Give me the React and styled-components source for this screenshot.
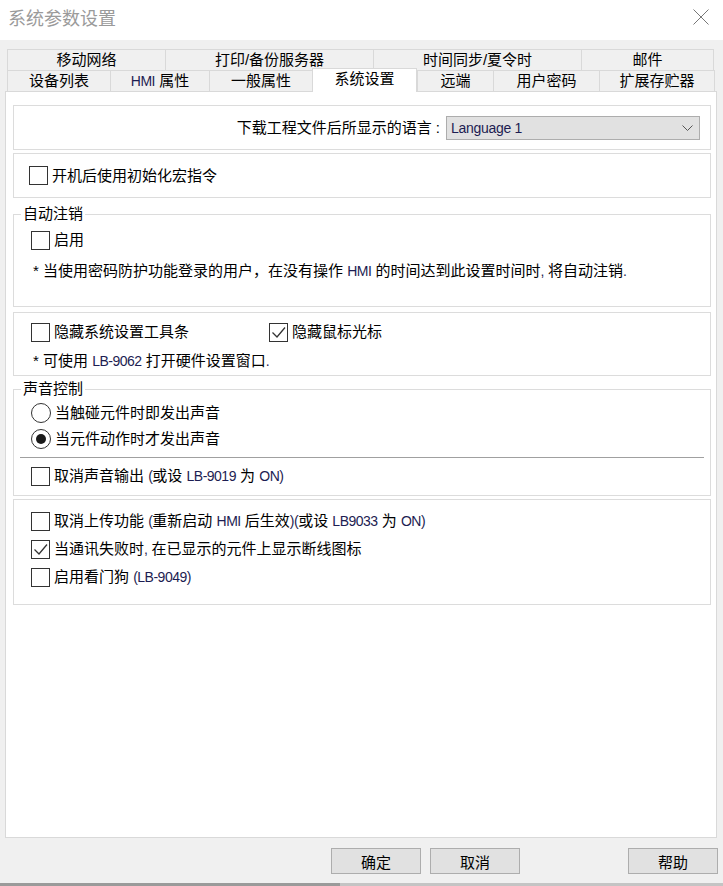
import React from 'react'
import styled, { createGlobalStyle } from 'styled-components'

const GlobalStyle = createGlobalStyle`
    html, body {
        margin: 0;
        padding: 0;
        background: #f0f0f0;
    }
    body {
        font-family: "Liberation Sans", "Noto Sans CJK SC", sans-serif;
        font-size: 15px;
        color: #000;
    }
`;

const Window = styled.div`
    width: 723px;
    height: 886px;
    display: flex;
    flex-direction: column;
    background: #f0f0f0;
    overflow: hidden;
`;

const TitleBar = styled.div`
    flex: none;
    height: 40px;
    background: #fff;
    display: flex;
    align-items: center;
    justify-content: space-between;
    padding: 0 14px 0 8px;
    box-sizing: border-box;
`;

const Title = styled.div`
    font-family: "Noto Sans CJK SC", sans-serif;
    font-size: 18px;
    color: #9a9a9a;
    margin-top: -7px;
`;

const CloseButton = styled.button`
    border: none;
    background: none;
    padding: 0;
    width: 16px;
    height: 16px;
    display: flex;
    margin-top: -7px;
`;

const Body = styled.div`
    flex: 1;
    display: flex;
    flex-direction: column;
    padding: 9px 6px 0 5px;
`;

const TabRow = styled.div`
    display: flex;
    align-items: flex-start;
    margin-left: 2px;
    height: 21px;
`;

const Tab = styled.div`
    width: ${p => p.$w}px;
    height: ${p => (p.$active ? 24 : 21)}px;
    margin-top: ${p => (p.$active ? -2 : 0)}px;
    box-sizing: border-box;
    border: 1px solid #d9d9d9;
    border-bottom: none;
    border-right: ${p => (p.$last || p.$active ? '1px solid #d9d9d9' : 'none')};
    background: ${p => (p.$active ? '#fff' : '#f0f0f0')};
    position: ${p => (p.$active ? 'relative' : 'static')};
    z-index: ${p => (p.$active ? 1 : 'auto')};
    display: flex;
    justify-content: center;
    align-items: flex-start;
    line-height: 19px;
    white-space: nowrap;
`;

const Panel = styled.div`
    height: 747px;
    box-sizing: border-box;
    border: 1px solid #d9d9d9;
    background: #fff;
    padding: 13px 5px 0 7px;
`;

const Group = styled.div`
    border: 1px solid #dcdcdc;
    margin-top: ${p => p.$mt || 0}px;
    padding: ${p => p.$pad || '0'};
`;

const LanguageGroup = styled(Group)`
    height: 45px;
    box-sizing: border-box;
    display: flex;
    align-items: center;
    justify-content: flex-end;
    padding-right: 10px;
`;

const SingleGroup = styled(Group)`
    height: 45px;
    box-sizing: border-box;
    display: flex;
    align-items: center;
    padding-left: 15px;
`;

const Section = styled.fieldset`
    margin: ${p => p.$mt || 0}px 0 0 0;
    padding: 0;
    border: 1px solid #dcdcdc;
    min-inline-size: 0;
`;

const Legend = styled.legend`
    margin-left: 7px;
    padding: 0 2px;
    line-height: 18px;
`;

const SectionBody = styled.div`
    padding: ${p => p.$pad};
`;

const FieldLabel = styled.span`
    margin-right: 6px;
    line-height: 20px;
`;

const Select = styled.div`
    width: 254px;
    height: 24px;
    box-sizing: border-box;
    border: 1px solid #adadad;
    background: #e1e1e1;
    display: flex;
    align-items: center;
    justify-content: space-between;
    padding: 0 6px 0 4px;
    font-size: 14px;
    letter-spacing: -0.3px;
    color: #1d1d52;
`;

const Row = styled.div`
    display: flex;
    align-items: center;
    height: 26px;
    margin-top: ${p => p.$mt || 0}px;
`;

const Item = styled.label`
    display: flex;
    align-items: center;
    gap: 4px;
    width: ${p => (p.$w ? `${p.$w}px` : 'auto')};
    line-height: 20px;
    white-space: nowrap;
`;

const Box = styled.span`
    width: 19px;
    height: 19px;
    box-sizing: border-box;
    border: 1px solid #333;
    background: #fff;
    display: flex;
    align-items: center;
    justify-content: center;
    flex: none;
`;

const Radio = styled(Box)`
    width: 20px;
    height: 20px;
    border-radius: 50%;

    &::after {
        content: '';
        width: 10px;
        height: 10px;
        border-radius: 50%;
        background: ${p => (p.$on ? '#1a1a1a' : 'transparent')};
    }
`;

const Note = styled.div`
    line-height: 20px;
    margin: ${p => p.$mt || 0}px 0 0 2px;
    white-space: nowrap;
`;

/* latin runs are a little condensed and navy next to the CJK text */
const En = styled.span`
    color: #1d1d52;
    font-size: 14px;
    letter-spacing: -0.5px;
`;

const Separator = styled.div`
    height: 1px;
    background: #a0a0a0;
    margin: 5px 6px 0 -11px;
`;

const ButtonBar = styled.div`
    display: flex;
    justify-content: flex-end;
    margin: 10px -1px 0 0;
    gap: 9px;
`;

const Button = styled.button`
    width: 90px;
    height: 26px;
    box-sizing: border-box;
    border: 1px solid #adadad;
    background: #e1e1e1;
    font-family: "Liberation Sans", "Noto Sans CJK SC", sans-serif;
    font-size: 15px;
    color: #000;
    padding: 0;
    margin-left: ${p => p.$ml || 0}px;
`;

const BottomEdge = styled.div`
    flex: none;
    height: 3px;
    background: linear-gradient(to right, #9a9a9a 0, #9a9a9a 340px, #c4c4c4 340px);
`;

const CloseIcon = () => (
    <svg width="16" height="16" viewBox="0 0 16 16">
        <path d="M0.5 0.5 L15.5 15.5 M15.5 0.5 L0.5 15.5" stroke="#777" strokeWidth="1" fill="none" />
    </svg>
);

const Chevron = () => (
    <svg width="11" height="6" viewBox="0 0 11 6">
        <path d="M0.5 0.5 L5.5 5.5 L10.5 0.5" stroke="#555" strokeWidth="1" fill="none" />
    </svg>
);

const Check = ({ on }) => (
    <Box>
        {on && (
            <svg width="17" height="17" viewBox="0 0 17 17">
                <path d="M2.5 8.5 L7 13 L15 3.5" stroke="#333" strokeWidth="1.3" fill="none" />
            </svg>
        )}
    </Box>
);

const CheckItem = ({ on, w, children }) => (
    <Item $w={w}>
        <Check on={on} />
        <span>{children}</span>
    </Item>
);

const RadioItem = ({ on, children }) => (
    <Item>
        <Radio $on={on} />
        <span>{children}</span>
    </Item>
);

const topTabs = [
    { label: '移动网络', w: 158 },
    { label: '打印/备份服务器', w: 208 },
    { label: '时间同步/夏令时', w: 208 },
    { label: '邮件', w: 133 },
];

const bottomTabs = [
    { label: '设备列表', w: 103 },
    { label: <><En>HMI</En> 属性</>, w: 99 },
    { label: '一般属性', w: 103 },
    { label: '系统设置', w: 105, active: true },
    { label: '远端', w: 76 },
    { label: '用户密码', w: 106 },
    { label: '扩展存贮器', w: 116 },
];

const App = () => {
    return (
        <Window>
            <GlobalStyle />
            <TitleBar>
                <Title>系统参数设置</Title>
                <CloseButton><CloseIcon /></CloseButton>
            </TitleBar>
            <Body>
                <TabRow>
                    {topTabs.map((t, i) => (
                        <Tab key={i} $w={t.w} $last={i === topTabs.length - 1}>
                            <span>{t.label}</span>
                        </Tab>
                    ))}
                </TabRow>
                <TabRow>
                    {bottomTabs.map((t, i) => (
                        <Tab key={i} $w={t.w} $active={t.active} $last={i === bottomTabs.length - 1}>
                            <span>{t.label}</span>
                        </Tab>
                    ))}
                </TabRow>
                <Panel>
                    <LanguageGroup>
                        <FieldLabel>下载工程文件后所显示的语言 :</FieldLabel>
                        <Select>
                            <span>Language 1</span>
                            <Chevron />
                        </Select>
                    </LanguageGroup>

                    <SingleGroup $mt={3}>
                        <CheckItem>开机后使用初始化宏指令</CheckItem>
                    </SingleGroup>

                    <Section $mt={7}>
                        <Legend>自动注销</Legend>
                        <SectionBody $pad="4px 0 25px 17px">
                            <Row>
                                <CheckItem>启用</CheckItem>
                            </Row>
                            <Note $mt={8}>
                                * 当使用密码防护功能登录的用户，在没有操作 <En>HMI</En> 的时间达到此设置时间时<En>,</En> 将自动注销<En>.</En>
                            </Note>
                        </SectionBody>
                    </Section>

                    <Group $mt={5} $pad="6px 0 4px 17px">
                        <Row>
                            <CheckItem w={238}>隐藏系统设置工具条</CheckItem>
                            <CheckItem on>隐藏鼠标光标</CheckItem>
                        </Row>
                        <Note $mt={6}>
                            * 可使用 <En>LB-9062</En> 打开硬件设置窗口<En>.</En>
                        </Note>
                    </Group>

                    <Section $mt={4}>
                        <Legend>声音控制</Legend>
                        <SectionBody $pad="2px 0 6px 17px">
                            <Row>
                                <RadioItem>当触碰元件时即发出声音</RadioItem>
                            </Row>
                            <Row>
                                <RadioItem on>当元件动作时才发出声音</RadioItem>
                            </Row>
                            <Separator />
                            <Row $mt={5}>
                                <CheckItem>取消声音输出 <En>(</En>或设 <En>LB-9019</En> 为 <En>ON)</En></CheckItem>
                            </Row>
                        </SectionBody>
                    </Section>

                    <Group $mt={3} $pad="8px 0 14px 17px">
                        <Row>
                            <CheckItem>取消上传功能 <En>(</En>重新启动 <En>HMI</En> 后生效<En>)(</En>或设 <En>LB9033</En> 为 <En>ON)</En></CheckItem>
                        </Row>
                        <Row $mt={2}>
                            <CheckItem on>当通讯失败时<En>,</En> 在已显示的元件上显示断线图标</CheckItem>
                        </Row>
                        <Row $mt={2}>
                            <CheckItem>启用看门狗 <En>(LB-9049)</En></CheckItem>
                        </Row>
                    </Group>
                </Panel>

                <ButtonBar>
                    <Button>确定</Button>
                    <Button>取消</Button>
                    <Button $ml={99}>帮助</Button>
                </ButtonBar>
            </Body>
            <BottomEdge />
        </Window>
    );
};

export default App;
